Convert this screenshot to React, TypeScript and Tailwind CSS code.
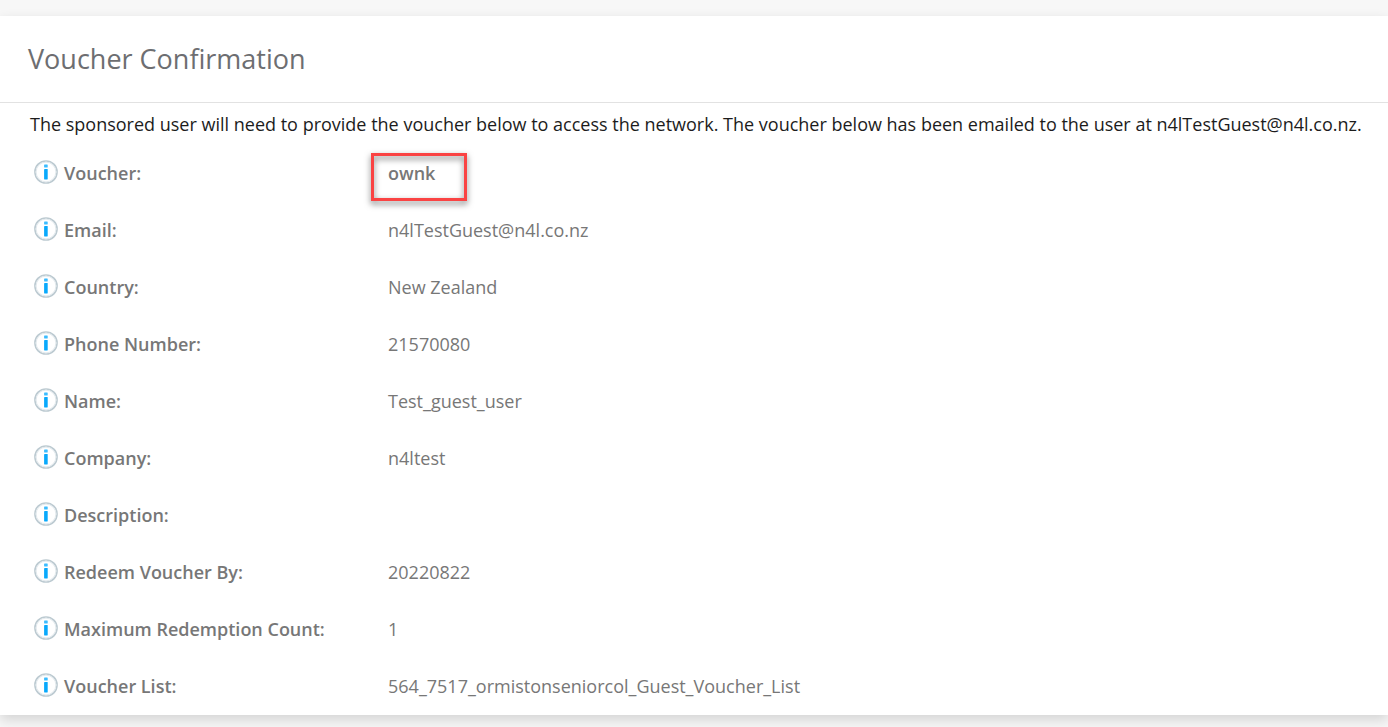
const rows: { label: string; value: string; highlighted?: boolean }[] = [
  { label: 'Voucher:', value: 'ownk', highlighted: true },
  { label: 'Email:', value: 'n4lTestGuest@n4l.co.nz' },
  { label: 'Country:', value: 'New Zealand' },
  { label: 'Phone Number:', value: '21570080' },
  { label: 'Name:', value: 'Test_guest_user' },
  { label: 'Company:', value: 'n4ltest' },
  { label: 'Description:', value: '' },
  { label: 'Redeem Voucher By:', value: '20220822' },
  { label: 'Maximum Redemption Count:', value: '1' },
  { label: 'Voucher List:', value: '564_7517_ormistonseniorcol_Guest_Voucher_List' },
];

function InfoIcon() {
  return (
    <svg viewBox="0 0 24 24" className="mb-0.5 size-6 shrink-0" aria-hidden="true">
      <circle cx="12" cy="12" r="11.1" fill="#fff" stroke="#bccad1" strokeWidth="1.5" />
      <circle cx="12" cy="12" r="9.9" fill="none" stroke="#e2e9ed" strokeWidth="1" />
      <rect x="10.1" y="4.6" width="3.6" height="3" rx="0.5" fill="#3bbcff" />
      <rect x="10.1" y="9" width="3.6" height="10.4" rx="0.4" fill="#08a9fc" />
    </svg>
  );
}

export default function App() {
  return (
    <div className="min-h-screen bg-[#f7f7f7] pt-4 pb-3 font-['Open_Sans',sans-serif] text-lg text-[#777777]">
      <main className="bg-white pb-0.5 shadow-[0_5px_12px_rgba(0,0,0,0.14)]">
        <header className="border-b border-[#e2e2e2] px-7 py-6">
          <h1 className="text-[27px] leading-[38px] text-[#6d6e71]">Voucher Confirmation</h1>
        </header>
        <p className="pt-2 pr-4 pl-[30px] leading-[26px] text-[#1c1c1c]">
          The sponsored user will need to provide the voucher below to access the network. The voucher below has been emailed to the user at n4lTestGuest@n4l.co.nz.
        </p>
        <dl className="pt-1.5">
          {rows.map((row) => (
            <div key={row.label} className="flex h-[57px] items-start pt-4 pl-[34px]">
              <dt className="flex w-[354px] shrink-0 items-center gap-1.5 leading-7 font-semibold">
                <InfoIcon />
                {row.label}
              </dt>
              <dd className="relative leading-7">
                {row.highlighted ? <strong className="font-semibold">{row.value}</strong> : row.value}
                {row.highlighted && (
                  <span className="absolute -top-1.5 -left-[17px] h-12 w-24 border-3 border-[#fa4343] drop-shadow-[0_3px_3px_rgba(0,0,0,0.55)]" />
                )}
              </dd>
            </div>
          ))}
        </dl>
      </main>
    </div>
  );
}
